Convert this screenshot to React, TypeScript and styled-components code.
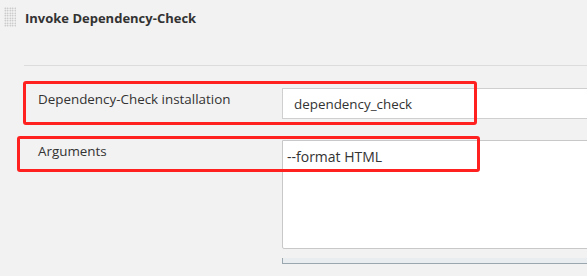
import styled, { createGlobalStyle } from "styled-components"

const GlobalStyle = createGlobalStyle`
  html, body {
    margin: 0;
    padding: 0;
    background: #f2f2f2;
    overflow: hidden;
  }
  body {
    font-family: "Open Sans", "Noto Sans", sans-serif;
    color: #333;
  }
`

const Page = styled.div`
  position: relative;
  width: 640px;
  height: 276px;
`

const Header = styled.div`
  display: flex;
  align-items: flex-start;
  padding: 7px 0 0 4px;
  height: 65px;
  box-sizing: border-box;
`

const DragHandle = styled.div`
  width: 12px;
  height: 20px;
  background-image: radial-gradient(circle, #b5b5b5 0.7px, transparent 0.9px);
  background-size: 2.5px 2.5px;
`

const Title = styled.h3`
  margin: 2px 0 0 9px;
  font-size: 13px;
  font-weight: 700;
  line-height: 18px;
  color: #333;
`

const Section = styled.div`
  margin-left: 24px;
  border-top: 1px solid #dcdcdc;
  padding-top: 22px;
`

const Row = styled.div<{ $gap?: number }>`
  display: grid;
  grid-template-columns: 258px 1fr;
  margin-bottom: ${(p) => p.$gap ?? 0}px;
`

const Label = styled.div`
  padding: 2px 0 0 14px;
  font-size: 13.4px;
  line-height: 18px;
  color: #333;
`

const TextInput = styled.div`
  height: 31px;
  box-sizing: border-box;
  border: 1px solid #cfcfcf;
  background: #fff;
  padding: 4px 0 0 11px;
  font-size: 13.4px;
  line-height: 22px;
`

const TextArea = styled.div`
  height: 109px;
  box-sizing: border-box;
  border: 1px solid #c8c8c8;
  border-radius: 0 0 0 2px;
  background: #fff;
  padding: 6px 0 0 4px;
  font-size: 14px;
  line-height: 20px;
`

const ResizeBar = styled.div`
  grid-column: 2;
  margin-top: 9px;
  height: 6px;
  box-sizing: border-box;
  background: #e9edef;
  border-left: 1px solid #9aa7ae;
  border-bottom: 1px solid #9aa7ae;
`

const Callout = styled.div<{ $x: number; $y: number; $w: number; $h: number }>`
  position: absolute;
  left: ${(p) => p.$x}px;
  top: ${(p) => p.$y}px;
  width: ${(p) => p.$w}px;
  height: ${(p) => p.$h}px;
  box-sizing: border-box;
  border: 3px solid #ff2020;
  border-radius: 3px;
  pointer-events: none;
`

export default function App() {
  return (
    <Page>
      <GlobalStyle />
      <Header>
        <DragHandle />
        <Title>Invoke Dependency-Check</Title>
      </Header>
      <Section>
        <Row $gap={21}>
          <Label>Dependency-Check installation</Label>
          <TextInput>dependency_check</TextInput>
        </Row>
        <Row>
          <Label>Arguments</Label>
          <TextArea>--format HTML</TextArea>
          <ResizeBar />
        </Row>
      </Section>
      <Callout $x={23} $y={81} $w={454} $h={44} />
      <Callout $x={17} $y={136} $w={463} $h={36} />
    </Page>
  )
}
